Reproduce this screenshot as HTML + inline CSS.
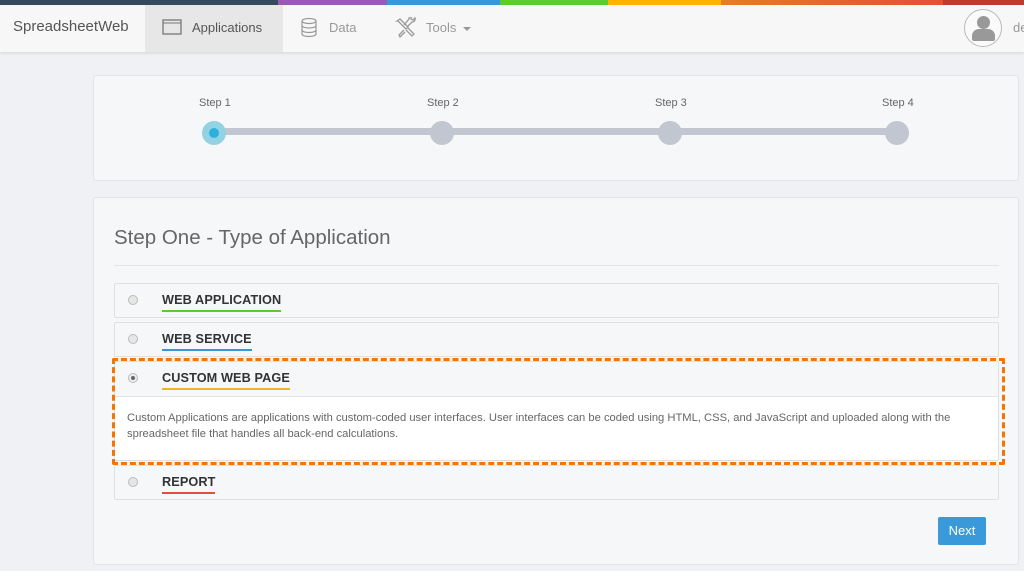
<!DOCTYPE html>
<html><head><meta charset="utf-8"><style>
*{box-sizing:border-box;margin:0;padding:0}
body{width:1024px;height:571px;overflow:hidden;background:#f0f1f4;font-family:"Liberation Sans",sans-serif;position:relative}
.bar{position:absolute;top:0;height:5px}
.nav{position:absolute;top:5px;left:0;width:1024px;height:47px;background:#f7f7f7;box-shadow:0 2px 2px rgba(0,0,0,.08)}
.nav span{position:absolute;top:15px;font-size:13px}
.panel{position:absolute;left:93px;width:926px;background:#f6f7f9;border:1px solid #e2e3e6;border-radius:3px}
.lbl{position:absolute;top:97px;font-size:11px;color:#666}
.dot{position:absolute;top:121px;width:24px;height:24px;border-radius:50%;background:#c2c6d0}
.opt{position:absolute;left:114px;width:885px;border:1px solid #dfe0e3;border-radius:2px;background:#f6f7f9}
.opt .r{position:absolute;left:13px;top:11px;width:10px;height:10px;border-radius:50%;border:1px solid #bbb;background:#e6e6e6}
.opt .t{position:absolute;left:47px;top:9px;font-size:12.7px;font-weight:bold;color:#333;padding-bottom:3px;letter-spacing:.1px}
</style></head><body>
<div class="bar" style="left:0;width:278px;background:#34495e"></div>
<div class="bar" style="left:278px;width:109px;background:#9b59b6"></div>
<div class="bar" style="left:387px;width:113px;background:#3498db"></div>
<div class="bar" style="left:500px;width:108px;background:#5ccb2f"></div>
<div class="bar" style="left:608px;width:113px;background:#ffb300"></div>
<div class="bar" style="left:721px;width:222px;background:linear-gradient(90deg,#e67e22,#e74c3c)"></div>
<div class="bar" style="left:943px;width:81px;background:#c0392b"></div>
<div class="nav">
<span style="left:13px;font-size:15px;top:13px;color:#555">SpreadsheetWeb</span>
<div style="position:absolute;left:145px;top:0;width:138px;height:47px;background:#e7e7e7"></div>
<svg style="position:absolute;left:162px;top:13px" width="20" height="18"><rect x="1" y="2" width="18" height="14" fill="none" stroke="#777" stroke-width="1.3"/><line x1="1" y1="5" x2="19" y2="5" stroke="#777"/></svg>
<span style="left:192px;color:#555">Applications</span>
<svg style="position:absolute;left:300px;top:12px" width="18" height="22"><g fill="none" stroke="#999" stroke-width="1.2"><ellipse cx="9" cy="4" rx="7" ry="2.5"/><path d="M2 4v13c0 1.5 3 2.5 7 2.5s7-1 7-2.5V4M2 8.5c0 1.5 3 2.5 7 2.5s7-1 7-2.5M2 13c0 1.5 3 2.5 7 2.5s7-1 7-2.5"/></g></svg>
<span style="left:329px;color:#999">Data</span>
<svg style="position:absolute;left:395px;top:12px" width="22" height="22"><g fill="none" stroke="#999" stroke-width="1.3"><path d="M2 4l3-2 8 8-2 2-8-8zM11 13l6 6 2-2-6-6M13 9l4-4a3 3 0 0 0 3-4l-2 2-2-1 0-2 2-1a3 3 0 0 0-4 3L9 8M9 13l-5 5 1 2 5-5"/></g></svg>
<span style="left:426px;color:#999">Tools</span>
<div style="position:absolute;left:463px;top:22px;border:4px solid transparent;border-top-color:#999;border-bottom:0"></div>
<div style="position:absolute;left:964px;top:4px;width:38px;height:38px;border-radius:50%;border:1px solid #bbb;background:#fafafa;overflow:hidden">
<div style="position:absolute;left:12px;top:6px;width:13px;height:13px;border-radius:50%;background:#999"></div>
<div style="position:absolute;left:7px;top:19px;width:23px;height:12px;border-radius:7px 7px 2px 2px;background:#999"></div></div>
<span style="left:1013px;color:#999">de</span>
</div>
<div class="panel" style="top:75px;height:106px"></div>
<div style="position:absolute;left:214px;top:128px;width:683px;height:7px;background:#c2c6d0"></div>
<div class="lbl" style="left:199px">Step 1</div><div class="lbl" style="left:427px">Step 2</div><div class="lbl" style="left:655px">Step 3</div><div class="lbl" style="left:882px">Step 4</div>
<div class="dot" style="left:202px;background:#93d2e3"><div style="position:absolute;left:7px;top:7px;width:10px;height:10px;border-radius:50%;background:#2eb0dc"></div></div>
<div class="dot" style="left:430px"></div><div class="dot" style="left:658px"></div><div class="dot" style="left:885px"></div>
<div class="panel" style="top:197px;height:368px"></div>
<div style="position:absolute;left:114px;top:226px;font-size:20.5px;color:#666">Step One - Type of Application</div>
<div style="position:absolute;left:114px;top:265px;width:885px;height:1px;background:#e3e4e6"></div>
<div class="opt" style="top:283px;height:35px"><div class="r"></div><div class="t" style="border-bottom:2px solid #5ccb2f">WEB APPLICATION</div></div>
<div class="opt" style="top:322px;height:35px"><div class="r"></div><div class="t" style="border-bottom:2px solid #3498db">WEB SERVICE</div></div>
<div class="opt" style="top:361px;height:100px"><div class="r" style="background:#eee"><div style="position:absolute;left:2px;top:2px;width:4px;height:4px;border-radius:50%;background:#666"></div></div><div class="t" style="border-bottom:2px solid #f5b324">CUSTOM WEB PAGE</div>
<div style="position:absolute;left:0;top:34px;width:883px;height:64px;background:#fff;border-top:1px solid #e3e4e6;padding:13px 12px;font-size:11.2px;line-height:16px;color:#666">Custom Applications are applications with custom-coded user interfaces. User interfaces can be coded using HTML, CSS, and JavaScript and uploaded along with the spreadsheet file that handles all back-end calculations.</div></div>
<div class="opt" style="top:465px;height:35px"><div class="r"></div><div class="t" style="border-bottom:2px solid #e74c3c">REPORT</div></div>
<div style="position:absolute;left:112px;top:358px;width:893px;height:107px;border:3px dashed #f47500;border-radius:2px"></div>
<div style="position:absolute;left:938px;top:517px;width:48px;height:28px;background:#3a9ad9;border-radius:2px;color:#fff;font-size:13px;text-align:center;line-height:28px">Next</div>
</body></html>
